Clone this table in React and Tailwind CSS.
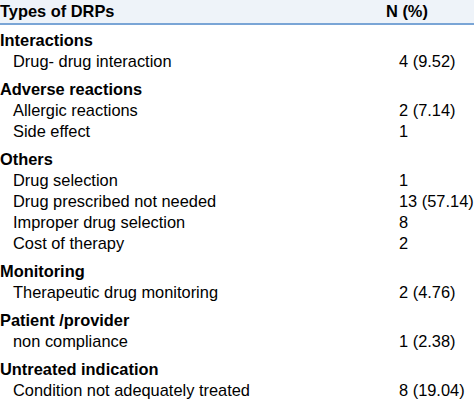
const groups = [
  {
    title: "Interactions",
    items: [{ label: "Drug- drug interaction", n: "4 (9.52)" }],
  },
  {
    title: "Adverse reactions",
    items: [
      { label: "Allergic reactions", n: "2 (7.14)" },
      { label: "Side effect", n: "1" },
    ],
  },
  {
    title: "Others",
    items: [
      { label: "Drug selection", n: "1" },
      { label: "Drug prescribed not needed", n: "13 (57.14)" },
      { label: "Improper drug selection", n: "8" },
      { label: "Cost of therapy", n: "2" },
    ],
  },
  {
    title: "Monitoring",
    items: [{ label: "Therapeutic drug monitoring", n: "2 (4.76)" }],
  },
  {
    title: "Patient /provider",
    items: [{ label: "non compliance", n: "1 (2.38)" }],
  },
  {
    title: "Untreated indication",
    items: [{ label: "Condition not adequately treated", n: "8 (19.04)" }],
  },
];

const App = () => {
  return (
    <div
      className="w-[474px] h-[400px] bg-white text-[16.4px] text-black overflow-hidden"
      style={{ fontFamily: '"Liberation Sans", Arial, sans-serif' }}
    >
      <div className="flex h-[25px] items-center bg-[#eef3f9] border-b-2 border-[#7aa5d6] font-bold">
        <div className="w-[386px]">Types of DRPs</div>
        <div>N (%)</div>
      </div>
      <div className="flex flex-col gap-[7px] pt-[5px]">
        {groups.map((g) => (
          <div key={g.title} className="flex flex-col">
            <div className="h-[21px] leading-[21px] font-bold">{g.title}</div>
            {g.items.map((it) => (
              <div key={it.label} className="flex h-[21px] leading-[21px]">
                <div className="w-[399px] pl-[13px]">{it.label}</div>
                <div className="whitespace-nowrap">{it.n}</div>
              </div>
            ))}
          </div>
        ))}
      </div>
    </div>
  );
};

export default App;
